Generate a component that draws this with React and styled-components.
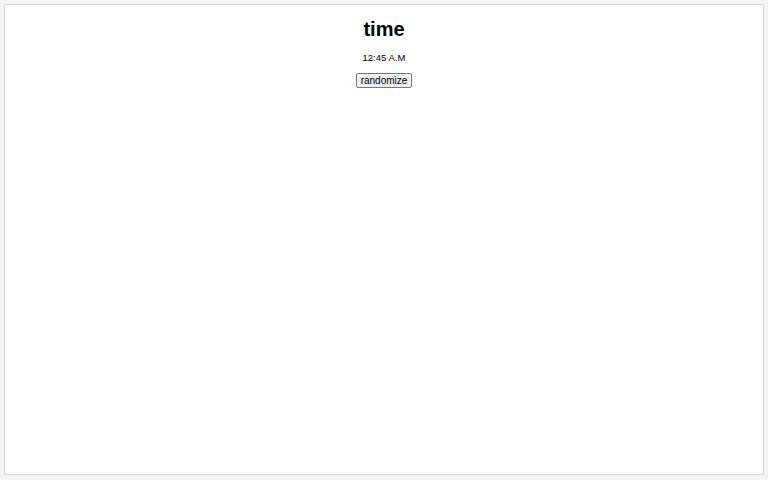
import React, { useState } from 'react'
import styled, { createGlobalStyle } from 'styled-components'

const Global = createGlobalStyle`
  html, body {
    margin: 0;
    height: 100%;
    background: #f4f4f4;
  }
  #root {
    height: 100%;
  }
`

const Frame = styled.div`
  box-sizing: border-box;
  height: 100%;
  padding: 4px 4px 5px 4px;
`

const Panel = styled.main`
  box-sizing: border-box;
  height: 100%;
  background: #fff;
  border: 1px solid #dcdcdc;
  display: flex;
  flex-direction: column;
  align-items: center;
  font-family: 'Liberation Sans', Arial, sans-serif;
  color: #000;
`

const Title = styled.h1`
  margin: 13px 0 0;
  font-size: 20px;
  font-weight: bold;
  line-height: 23px;
`

const Clock = styled.p`
  margin: 11px 0 0;
  font-size: 9.6px;
  line-height: 12px;
`

const Button = styled.button`
  margin-top: 9px;
  font-family: 'Liberation Sans', Arial, sans-serif;
  font-size: 10px;
  line-height: 11px;
  padding: 1px 4px;
  background: #efefef;
  border: 1px solid #767676;
  border-radius: 2px;
  color: #000;
`

const pad = (n) => String(n).padStart(2, '0')

export default function App() {
  const [time, setTime] = useState({ h: 12, m: 45, am: true })

  const randomize = () => {
    setTime({
      h: Math.floor(Math.random() * 12) + 1,
      m: Math.floor(Math.random() * 60),
      am: Math.random() < 0.5,
    })
  }

  return (
    <>
      <Global />
      <Frame>
        <Panel>
          <Title>time</Title>
          <Clock>
            {time.h}:{pad(time.m)} {time.am ? 'A.M' : 'P.M'}
          </Clock>
          <Button onClick={randomize}>randomize</Button>
        </Panel>
      </Frame>
    </>
  )
}
